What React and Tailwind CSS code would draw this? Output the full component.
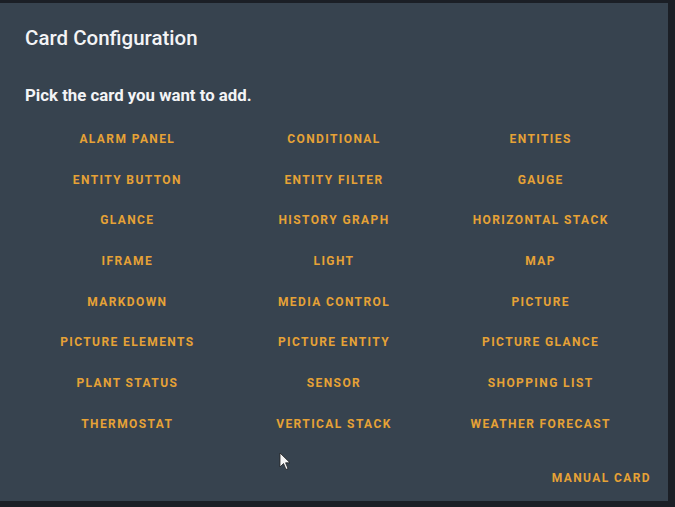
import React from "react";

const items = [
  "ALARM PANEL", "CONDITIONAL", "ENTITIES",
  "ENTITY BUTTON", "ENTITY FILTER", "GAUGE",
  "GLANCE", "HISTORY GRAPH", "HORIZONTAL STACK",
  "IFRAME", "LIGHT", "MAP",
  "MARKDOWN", "MEDIA CONTROL", "PICTURE",
  "PICTURE ELEMENTS", "PICTURE ENTITY", "PICTURE GLANCE",
  "PLANT STATUS", "SENSOR", "SHOPPING LIST",
  "THERMOSTAT", "VERTICAL STACK", "WEATHER FORECAST",
];

export default function App() {
  return (
    <div
      className="w-[675px] h-[507px] bg-[#1b1f26] pt-[3px] pr-[7px] pb-[6px] overflow-hidden"
      style={{ fontFamily: "Roboto, 'Noto Sans', sans-serif" }}
    >
      <div className="relative h-full bg-[#37434f] flex flex-col">
        <div className="pl-[25px] pt-[23px] text-[20.5px] leading-[24px] font-medium text-[#f3f4f6]">
          Card Configuration
        </div>
        <div className="pl-[25px] mt-[35px] text-[16.8px] leading-[20px] font-bold text-[#f3f4f6]">
          Pick the card you want to add.
        </div>
        <div className="grid grid-cols-3 ml-[24px] w-[620px] mt-[27px]">
          {items.map((t) => (
            <div key={t} className="h-[40.7px] flex items-start justify-center">
              <span className="text-[12px] leading-[14px] font-bold tracking-[1.4px] text-[#e6a236]">
                {t}
              </span>
            </div>
          ))}
        </div>
        <div className="flex justify-end pr-[17px] mt-[13px]">
          <span className="text-[12px] leading-[14px] font-bold tracking-[1.4px] text-[#e6a236]">
            MANUAL CARD
          </span>
        </div>
        <svg
          className="absolute left-[279px] top-[449px]"
          width="12"
          height="19"
          viewBox="0 0 12 19"
        >
          <path d="M1 1 L1 15 L4.5 11.5 L7 17.5 L9 16.6 L6.6 10.8 L11 10.8 Z" fill="#f5f5f5" stroke="#222" strokeWidth="0.8" />
        </svg>
      </div>
    </div>
  );
}
